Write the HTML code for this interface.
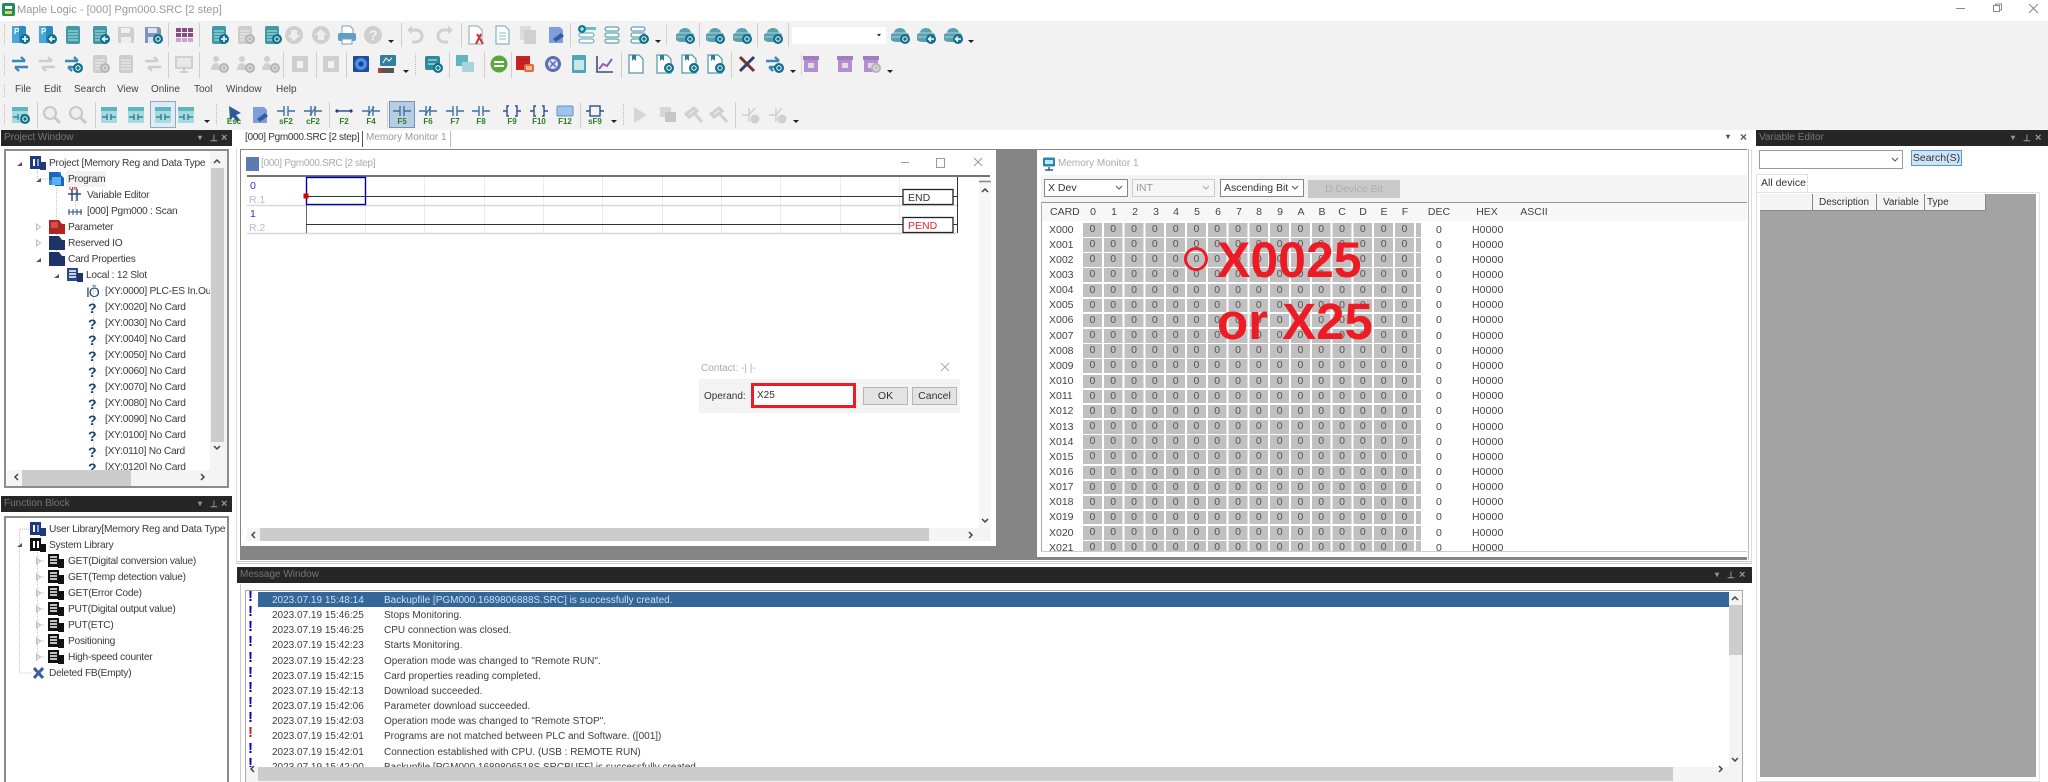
<!DOCTYPE html>
<html><head><meta charset="utf-8"><title>Maple Logic</title>
<style>
html,body{margin:0;padding:0;width:2048px;height:782px;overflow:hidden;background:#fff;font-family:"Liberation Sans",sans-serif;font-size:10px;color:#333}
div{position:absolute;box-sizing:border-box}
p{position:absolute;margin:0;line-height:14px;white-space:nowrap}
.bar{background:#262626;height:16px;color:#777;font-size:10px;line-height:16px;padding-left:3px;white-space:nowrap}
.bar span{position:absolute;top:0;color:#999;font-size:11px;font-weight:bold}
.m p{font-size:10px;color:#444;top:83px}
.tr p{font-size:10.2px;letter-spacing:-.25px;color:#3a3a3a;margin-top:1px}
.sb{background:#ccc}
.r{position:relative;height:15.17px;font-size:10.5px;color:#444}
.r b,.r u,.r s,.r em{position:absolute;top:0;font-weight:normal;font-style:normal;text-decoration:none;line-height:14px}
.r b{left:1049px}
.r u{left:1083px;top:.5px;width:331px;height:13.5px;line-height:13.5px;letter-spacing:14.96px;padding-left:6.5px;background:repeating-linear-gradient(90deg,#c0c0c0 0 18.8px,#fff 18.8px 20.8px);overflow:hidden;white-space:nowrap;color:#555}
.r s{left:1436px}
.r em{left:1472px;letter-spacing:.1px}
.h{top:205px;height:14px;line-height:14px;font-size:10.5px;color:#444;text-align:center}
.c{background:#fff;border:1px solid #999;height:18px;font-size:10.5px;line-height:16px;padding-left:3px;top:179px}
.c svg{position:absolute;right:4px;top:5px}
.ms p{font-size:10px;color:#3d3d3d;margin-top:1px}
.ms p.ex{font-size:15px;font-weight:bold;color:#0000d8;margin-top:-1px}
.ms p.ex.red{color:#e01010}
.ti{letter-spacing:-.3px}
</style></head><body>
<svg width="0" height="0" style="position:absolute"><defs>
<symbol id="pb" viewBox="0 0 20 20"><rect x="2" y="1" width="14" height="17" rx="2" fill="#2b8cc4"/><rect x="2" y="1" width="7" height="17" fill="#4aa5d8"/><text x="4" y="9" font-size="8" font-weight="bold" fill="#fff" font-family="Liberation Sans">P</text></symbol>
<symbol id="dt" viewBox="0 0 20 20"><rect x="3" y="1" width="14" height="18" rx="2" fill="#3e9aa6"/><path d="M5 6h10M5 9h10M5 12h10M5 15h10" stroke="#bfe3e6"/></symbol>
<symbol id="dg" viewBox="0 0 20 20"><rect x="3" y="1" width="14" height="18" rx="2" fill="#cdcdcd"/><path d="M5 6h10M5 9h10M5 12h10M5 15h10" stroke="#eee"/></symbol>
<symbol id="p" viewBox="0 0 20 20"><circle cx="15" cy="14" r="5" fill="#0f6f8c"/><path d="M12 14h6M15 11v6" stroke="#fff" stroke-width="1.6"/></symbol>
<symbol id="l" viewBox="0 0 20 20"><circle cx="15" cy="14" r="5" fill="#0f6f8c"/><path d="M18 14h-5M15 11.500l-2.500 2.500 2.500 2.500" stroke="#fff" stroke-width="1.4" fill="none"/></symbol>
<symbol id="o" viewBox="0 0 20 20"><circle cx="15" cy="14" r="5" fill="#0f6f8c"/><circle cx="15" cy="14" r="2.200" fill="none" stroke="#fff"/></symbol>
<symbol id="og" viewBox="0 0 20 20"><circle cx="15" cy="14" r="5" fill="#b5b5b5"/><circle cx="15" cy="14" r="2.200" fill="none" stroke="#eee"/></symbol>
<symbol id="sv" viewBox="0 0 20 20"><path d="M2 2h14l2 2v14H2z" fill="#cfcfcf"/><rect x="5" y="3" width="9" height="5" fill="#f0f0f0"/><rect x="5" y="12" width="10" height="6" fill="#eee"/></symbol>
<symbol id="svb" viewBox="0 0 20 20"><path d="M2 2h14l2 2v14H2z" fill="#7f93bb"/><rect x="5" y="3" width="9" height="5" fill="#dde4ef"/><rect x="5" y="12" width="10" height="6" fill="#dde4ef"/></symbol>
<symbol id="gr" viewBox="0 0 20 20"><g fill="#8a4a88"><rect x="2" y="3" width="5" height="4"/><rect x="8" y="3" width="5" height="4"/><rect x="14" y="3" width="5" height="4"/><rect x="2" y="8" width="5" height="4"/><rect x="8" y="8" width="5" height="4"/><rect x="14" y="8" width="5" height="4"/></g><g fill="#c9a6c9"><rect x="2" y="13" width="5" height="4"/><rect x="8" y="13" width="5" height="4"/><rect x="14" y="13" width="5" height="4"/></g></symbol>
<symbol id="cd" viewBox="0 0 20 20"><circle cx="10" cy="10" r="9" fill="#cfcfcf"/><path d="M7 5h6v5h3l-6 6-6-6h3z" fill="#eee"/></symbol>
<symbol id="cu" viewBox="0 0 20 20"><circle cx="10" cy="10" r="9" fill="#cfcfcf"/><path d="M7 15h6v-5h3l-6-6-6 6h3z" fill="#eee"/></symbol>
<symbol id="pr" viewBox="0 0 20 20"><path d="M5 1h8l3 3v5H5z" fill="#fff" stroke="#7a9dbb"/><rect x="1" y="8" width="18" height="8" rx="2" fill="#5f9fc7"/><rect x="5" y="14" width="10" height="5" fill="#fff" stroke="#7a9dbb"/></symbol>
<symbol id="q" viewBox="0 0 20 20"><circle cx="10" cy="10" r="9" fill="#cfcfcf"/><text x="6" y="15" font-size="14" font-weight="bold" fill="#f2f2f2" font-family="Liberation Sans">?</text></symbol>
<symbol id="un" viewBox="0 0 20 20"><path d="M5 5h6a5 5 0 0 1 0 12H7" fill="none" stroke="#cfcfcf" stroke-width="3"/><path d="M7 1L2 5l5 4z" fill="#cfcfcf"/></symbol>
<symbol id="re" viewBox="0 0 20 20"><path d="M15 5H9a5 5 0 0 0 0 12h4" fill="none" stroke="#cfcfcf" stroke-width="3"/><path d="M13 1l5 4-5 4z" fill="#cfcfcf"/></symbol>
<symbol id="dr" viewBox="0 0 20 20"><path d="M3 1h9l4 4v14H3z" fill="#fff" stroke="#8aa"/><path d="M11 9l6 10M15 9l-5 10" stroke="#c33" stroke-width="2"/></symbol>
<symbol id="dw" viewBox="0 0 20 20"><path d="M3 1h9l4 4v14H3z" fill="#fff" stroke="#6aa5b5"/><path d="M6 8h7M6 11h7M6 14h7" stroke="#8bb"/></symbol>
<symbol id="dc" viewBox="0 0 20 20"><rect x="2" y="1" width="11" height="14" fill="#ddd"/><rect x="6" y="5" width="12" height="14" fill="#d0d0d0"/></symbol>
<symbol id="nt" viewBox="0 0 20 20"><path d="M3 2h11l3 3v13H3z" fill="#7f9fdc"/><path d="M7 14l8-6 3 3-8 6z" fill="#355c9c"/></symbol>
<symbol id="ls" viewBox="0 0 20 20"><g fill="#fff" stroke="#5fa3b3" stroke-width="1.300"><rect x="2" y="2" width="14" height="4" rx="2"/><rect x="2" y="8" width="14" height="4" rx="2"/><rect x="2" y="14" width="14" height="4" rx="2"/></g></symbol>
<symbol id="lp" viewBox="0 0 20 20"><rect x="6" y="2" width="13" height="3" fill="#6bbcc8"/><g fill="#fff" stroke="#5fa3b3"><rect x="2" y="8" width="15" height="4" rx="2"/><rect x="2" y="14" width="15" height="4" rx="2"/></g><circle cx="5" cy="4" r="4" fill="#0f7f96"/><path d="M3 4h4M5 2v4" stroke="#fff"/></symbol>
<symbol id="cl" viewBox="0 0 20 20"><path d="M1 11c0-2 1-3 3-3 0-3 3-5 6-5s6 2 6 5c2 0 3 1 3 3v3c0 2-2 3-9 3s-9-1-9-3z" fill="#5aa0ae"/><path d="M3 8h14M2 12h16" stroke="#a8d4db"/></symbol>
<symbol id="sw" viewBox="0 0 20 20"><path d="M2 7h13M15 7l-4-4M2 7h12" stroke="#3a87b8" stroke-width="2.400" fill="none"/><path d="M18 13H5M5 13l4 4" stroke="#3a87b8" stroke-width="2.400" fill="none"/></symbol>
<symbol id="swg" viewBox="0 0 20 20"><path d="M2 7h13M15 7l-4-4M18 13H5M5 13l4 4" stroke="#cdcdcd" stroke-width="2.400" fill="none"/></symbol>
<symbol id="bx" viewBox="0 0 20 20"><rect x="2" y="2" width="16" height="16" rx="1" fill="#cfcfcf"/><rect x="7" y="7" width="6" height="7" fill="#f2f2f2"/></symbol>
<symbol id="mn" viewBox="0 0 20 20"><rect x="1" y="2" width="18" height="13" rx="1" fill="#cfcfcf"/><rect x="3" y="4" width="14" height="9" fill="#e8e8e8"/><path d="M6 18h8M10 15v3" stroke="#cfcfcf" stroke-width="2"/></symbol>
<symbol id="pe" viewBox="0 0 20 20"><circle cx="7" cy="5" r="3" fill="#cfcfcf"/><path d="M2 16c0-5 3-7 5-7s5 2 5 7z" fill="#cfcfcf"/></symbol>
<symbol id="gl" viewBox="0 0 20 20"><rect x="2" y="2" width="16" height="16" rx="1" fill="#1e4da0"/><circle cx="10" cy="10" r="6" fill="#4f8fe0"/><circle cx="10" cy="10" r="2.500" fill="#1d3f90"/></symbol>
<symbol id="mb" viewBox="0 0 20 20"><rect x="3" y="1" width="16" height="11" rx="1" fill="#2f7fa3"/><path d="M6 9l3-5 3 3 3-3" stroke="#fff" fill="none"/><rect x="1" y="14" width="16" height="5" fill="#555"/><rect x="1" y="14" width="3" height="5" fill="#c33"/></symbol>
<symbol id="tc" viewBox="0 0 20 20"><rect x="2" y="2" width="15" height="14" rx="2" fill="#2d8a9a"/><path d="M5 6h9M5 10h9" stroke="#cfe" /></symbol>
<symbol id="tp" viewBox="0 0 20 20"><rect x="1" y="1" width="12" height="11" fill="#5fb6c0"/><rect x="7" y="8" width="12" height="10" fill="#a9d4da"/></symbol>
<symbol id="gn" viewBox="0 0 20 20"><circle cx="10" cy="10" r="8.500" fill="#5aa83c"/><path d="M5 8h10M5 12h10" stroke="#fff" stroke-width="2"/></symbol>
<symbol id="rd" viewBox="0 0 20 20"><rect x="1" y="2" width="14" height="14" fill="#c22"/><path d="M3 6h10M3 10h10" stroke="#922"/><rect x="9" y="10" width="10" height="8" rx="2" fill="#e66b3c"/><path d="M11 13h6M11 15h6" stroke="#fff"/></symbol>
<symbol id="ge" viewBox="0 0 20 20"><circle cx="10" cy="10" r="8" fill="#5a6fb8"/><circle cx="10" cy="10" r="5" fill="#dfe4f3"/><path d="M7 7l6 6M13 7l-6 6" stroke="#5a6fb8" stroke-width="1.500"/></symbol>
<symbol id="ca" viewBox="0 0 20 20"><rect x="3" y="1" width="14" height="18" rx="1" fill="#4ea7b4"/><rect x="5" y="6" width="10" height="10" fill="#c8e6ea"/></symbol>
<symbol id="ch" viewBox="0 0 20 20"><path d="M2 2v16h16" stroke="#3d4a8a" stroke-width="1.600" fill="none"/><path d="M4 15l4-5 4 2 5-7" stroke="#8d5fb5" stroke-width="2" fill="none"/></symbol>
<symbol id="bk" viewBox="0 0 20 20"><path d="M3 1h10l4 4v14H3z" fill="#fff" stroke="#4f97a8" stroke-width="1.200"/><path d="M6 1h4v6L8 5 6 7z" fill="#2a7f96"/></symbol>
<symbol id="tl" viewBox="0 0 20 20"><path d="M3 3l14 14" stroke="#7a2f2f" stroke-width="3"/><path d="M17 3L3 17" stroke="#333f66" stroke-width="3"/></symbol>
<symbol id="pu" viewBox="0 0 20 20"><path d="M2 2h16v4H2z" fill="#a07cc0"/><rect x="3" y="6" width="14" height="12" fill="#b48ed0"/><rect x="7" y="9" width="6" height="5" fill="#ddd"/></symbol>
<symbol id="la" viewBox="0 0 20 20"><rect x="2" y="2" width="16" height="16" rx="1" fill="#a4dbe0"/><rect x="2" y="2" width="16" height="4" fill="#5eb6c2"/><path d="M3 12h5M12 12h5M8 9v6M12 9v6" stroke="#2b6f86" stroke-width="1.200"/></symbol>
<symbol id="mg" viewBox="0 0 20 20"><circle cx="8" cy="8" r="6" fill="#eee" stroke="#c8c8c8" stroke-width="2"/><path d="M12 12l6 6" stroke="#c8c8c8" stroke-width="3"/></symbol>
<symbol id="ar" viewBox="0 0 20 20"><path d="M3 1l12 7-5 2 4 5-3 2-4-5-3 4z" fill="#2e5a9c"/></symbol>
<symbol id="c1" viewBox="0 0 20 20"><path d="M1 6h7M12 6h7M8 1v10M12 1v10" stroke="#3f6f9f" stroke-width="1.400" fill="none"/></symbol>
<symbol id="c2" viewBox="0 0 20 20"><path d="M1 6h7M12 6h7M8 1v10M12 1v10M7 10l6-8" stroke="#3f6f9f" stroke-width="1.400" fill="none"/></symbol>
<symbol id="w" viewBox="0 0 20 20"><path d="M2 6h16" stroke="#4a5a9c" stroke-width="1.600"/><circle cx="3" cy="6" r="1.600" fill="#2b3f80"/><circle cx="17" cy="6" r="1.600" fill="#2b3f80"/></symbol>
<symbol id="br" viewBox="0 0 20 20"><path d="M1 6h4M15 6h4M7 1H5v10h2M13 1h2v10h-2" stroke="#2e4f8e" stroke-width="1.400" fill="none"/></symbol>
<symbol id="bb" viewBox="0 0 20 20"><rect x="2" y="1" width="16" height="10" rx="1" fill="#9fc3ea" stroke="#6a8fc0"/></symbol>
<symbol id="sq" viewBox="0 0 20 20"><path d="M1 6h4M15 6h4" stroke="#2e4f8e" stroke-width="1.400"/><rect x="5" y="1" width="10" height="10" fill="none" stroke="#2e4f8e" stroke-width="1.400"/></symbol>
<symbol id="py" viewBox="0 0 20 20"><path d="M4 2l13 8-13 8z" fill="#d6d6d6"/></symbol>
<symbol id="dd" viewBox="0 0 20 20"><rect x="2" y="2" width="11" height="10" fill="#d6d6d6"/><rect x="7" y="7" width="11" height="10" fill="#c6c6c6"/></symbol>
<symbol id="hm" viewBox="0 0 20 20"><path d="M2 9l8-6 3 3-8 6zM10 8l8 9" stroke="#d0d0d0" stroke-width="3" fill="none"/></symbol>
<symbol id="cg" viewBox="0 0 20 20"><path d="M1 10h7M8 3v14M8 10l6-7M12 12v6" stroke="#cfcfcf" stroke-width="1.500" fill="none"/><circle cx="14" cy="14" r="4.500" fill="#cfcfcf"/></symbol>
<symbol id="tn" viewBox="0 0 16 16"><rect x="0" y="1" width="11" height="13" fill="#1e3a7c"/><rect x="10" y="7" width="6" height="8" fill="#1e3a7c"/><rect x="3" y="4" width="2" height="7" fill="#fff"/><rect x="7" y="4" width="2" height="7" fill="#7fa5e0"/></symbol>
<symbol id="tk" viewBox="0 0 16 16"><rect x="0" y="1" width="11" height="13" fill="#111"/><rect x="10" y="7" width="6" height="8" fill="#111"/><rect x="3" y="4" width="2" height="7" fill="#fff"/><rect x="7" y="4" width="2" height="7" fill="#fff"/></symbol>
<symbol id="tb" viewBox="0 0 16 16"><rect x="0" y="1" width="12" height="13" fill="#2e8ae0"/><path d="M9 1l6 6v8H6V9H0V1z" fill="#1a66b8"/><rect x="3" y="6" width="9" height="8" fill="#5cb0f0"/></symbol>
<symbol id="tr" viewBox="0 0 16 16"><path d="M0 1h10l3 4h3v10H0z" fill="#b02424"/><path d="M2 3h7v6H2z" fill="#d05050"/></symbol>
<symbol id="ty" viewBox="0 0 16 16"><path d="M0 1h10l3 4h3v10H0z" fill="#1e3468"/></symbol>
<symbol id="tl2" viewBox="0 0 16 16"><rect x="0" y="1" width="11" height="13" fill="#2b4a8a"/><path d="M2 4h7M2 7h7M2 10h7" stroke="#fff" stroke-width="1.500"/><rect x="10" y="6" width="6" height="9" fill="#1e3468"/></symbol>
<symbol id="tf" viewBox="0 0 16 16"><rect x="0" y="1" width="11" height="13" fill="#111"/><path d="M2 4h7M2 7h7M2 10h7" stroke="#fff" stroke-width="1.500"/><rect x="10" y="6" width="6" height="9" fill="#111"/></symbol>
</defs></svg>

<!-- title -->
<svg style="position:absolute;left:2px;top:3px" width="13" height="13"><rect width="13" height="13" rx="2" fill="#1f8f5f"/><rect x="3" y="3" width="7" height="3" fill="#fff"/><rect x="3" y="8" width="7" height="3" fill="#e8d24a"/></svg>
<p style="left:17px;top:3px;font-size:11.100px;color:#999">Maple Logic - [000] Pgm000.SRC [2 step]</p>
<svg style="position:absolute;left:1950px;top:0" width="98" height="20" fill="none" stroke="#888"><path d="M6 8.500h9"/><rect x="43.500" y="5.500" width="6" height="6"/><path d="M45.500 5.500v-1.500h6v6h-2"/><path d="M79 4l9 9M88 4l-9 9"/></svg>

<!-- toolbar -->
<div style="left:0;top:21px;width:2048px;height:109px;background:#f2f2f2"></div>
<div style="left:792px;top:27px;width:94px;height:17px;background:#fff"></div>
<div style="left:150px;top:101px;width:26px;height:27px;background:#e2eaf3;border:1px solid #8fa8c4"></div>
<div style="left:389px;top:101px;width:26px;height:27px;background:#b8cde4;border:1px solid #6f93bb"></div>
<div class="m">
<p style="left:15px">File</p><p style="left:44px">Edit</p><p style="left:74px">Search</p><p style="left:117px">View</p><p style="left:151px">Online</p><p style="left:194px">Tool</p><p style="left:226px">Window</p><p style="left:276px">Help</p>
</div>
<svg style="position:absolute;left:0;top:0" width="2048" height="130">
<g stroke="#cfcfcf"><path d="M168.500 23v24M199.500 23v24M401.500 23v24M461.500 23v24M570.500 23v24M699.500 23v24M757.500 23v24M788.500 23v24M168.500 52v26M199.500 52v26M283.500 52v26M316.500 52v26M346.500 52v26M449.500 52v26M484.500 52v26M511.500 52v26M621.500 52v26M731.500 52v26M37.500 102v26M95.500 102v26M329.500 102v26M387.500 102v26M580.500 102v26M735.500 102v26"/></g>
<g stroke="#bbb" stroke-dasharray="1 1"><path d="M4.500 24v22M4.500 54v22M4.500 84v14M4.500 104v22M666.500 24v22M415.500 54v22M801.500 54v22M216.500 104v22M623.500 104v22"/></g>
<g fill="#222"><path d="M388 40h6l-3 3zM655 40h6l-3 3zM968 40h6l-3 3zM403 70h6l-3 3zM790 70h6l-3 3zM887 70h6l-3 3zM204 120h6l-3 3zM611 120h6l-3 3zM793 120h6l-3 3zM877 34h4l-2 2.500z"/></g>
<g id="r1">
<use href="#pb" x="10" y="25" width="20" height="20"/><use href="#p" x="10" y="25" width="20" height="20"/>
<use href="#pb" x="37" y="25" width="20" height="20"/><use href="#l" x="37" y="25" width="20" height="20"/>
<use href="#dt" x="63" y="25" width="20" height="20"/>
<use href="#dt" x="90" y="25" width="20" height="20"/><use href="#l" x="90" y="25" width="20" height="20"/>
<use href="#sv" x="116" y="25" width="20" height="20"/>
<use href="#svb" x="143" y="25" width="20" height="20"/><use href="#o" x="143" y="25" width="20" height="20"/>
<use href="#gr" x="174" y="25" width="20" height="20"/>
<use href="#dt" x="209" y="25" width="20" height="20"/><use href="#p" x="209" y="25" width="20" height="20"/>
<use href="#dg" x="235" y="25" width="20" height="20"/><use href="#og" x="235" y="25" width="20" height="20"/>
<use href="#dt" x="262" y="25" width="20" height="20"/><use href="#o" x="262" y="25" width="20" height="20"/>
<use href="#cd" x="284" y="25" width="20" height="20"/><use href="#cu" x="311" y="25" width="20" height="20"/>
<use href="#pr" x="337" y="25" width="20" height="20"/><use href="#q" x="363" y="25" width="20" height="20"/>
<use href="#un" x="405" y="25" width="20" height="20"/><use href="#re" x="435" y="25" width="20" height="20"/>
<use href="#dr" x="466" y="25" width="20" height="20"/><use href="#dw" x="493" y="25" width="20" height="20"/>
<use href="#dc" x="518" y="25" width="20" height="20"/><use href="#nt" x="546" y="25" width="20" height="20"/>
<use href="#lp" x="577" y="25" width="20" height="20"/><use href="#ls" x="603" y="25" width="20" height="20"/>
<use href="#ls" x="629" y="25" width="20" height="20"/><use href="#o" x="629" y="25" width="20" height="20"/>
<use href="#cl" x="675" y="25" width="20" height="20"/><use href="#o" x="675" y="25" width="20" height="20"/>
<use href="#cl" x="705" y="25" width="20" height="20"/><use href="#o" x="705" y="25" width="20" height="20"/>
<use href="#cl" x="732" y="25" width="20" height="20"/><use href="#o" x="732" y="25" width="20" height="20"/>
<use href="#cl" x="763" y="25" width="20" height="20"/><use href="#o" x="763" y="25" width="20" height="20"/>
<use href="#cl" x="890" y="25" width="20" height="20"/><use href="#o" x="890" y="25" width="20" height="20"/>
<use href="#cl" x="916" y="25" width="20" height="20"/><use href="#l" x="916" y="25" width="20" height="20"/>
<use href="#cl" x="943" y="25" width="20" height="20"/><use href="#l" x="943" y="25" width="20" height="20"/>
</g>
<g id="r2">
<use href="#sw" x="10" y="54" width="20" height="20"/><use href="#swg" x="37" y="54" width="20" height="20"/>
<use href="#sw" x="63" y="54" width="20" height="20"/><use href="#o" x="63" y="54" width="20" height="20"/>
<use href="#dg" x="90" y="54" width="20" height="20"/><use href="#og" x="90" y="54" width="20" height="20"/>
<use href="#dg" x="116" y="54" width="20" height="20"/><use href="#swg" x="143" y="54" width="20" height="20"/>
<use href="#mn" x="174" y="54" width="20" height="20"/>
<use href="#pe" x="209" y="54" width="20" height="20"/><use href="#og" x="209" y="54" width="20" height="20"/>
<use href="#pe" x="235" y="54" width="20" height="20"/><use href="#og" x="235" y="54" width="20" height="20"/>
<use href="#pe" x="260" y="54" width="20" height="20"/><use href="#og" x="260" y="54" width="20" height="20"/>
<use href="#bx" x="290" y="54" width="20" height="20"/><use href="#bx" x="321" y="54" width="20" height="20"/>
<use href="#gl" x="351" y="54" width="20" height="20"/><use href="#mb" x="377" y="54" width="20" height="20"/>
<use href="#tc" x="423" y="54" width="20" height="20"/><use href="#o" x="423" y="54" width="20" height="20"/>
<use href="#tp" x="455" y="54" width="20" height="20"/>
<use href="#gn" x="489" y="54" width="20" height="20"/><use href="#rd" x="515" y="54" width="20" height="20"/>
<use href="#ge" x="543" y="54" width="20" height="20"/><use href="#ca" x="569" y="54" width="20" height="20"/>
<use href="#ch" x="595" y="54" width="20" height="20"/><use href="#bk" x="626" y="54" width="20" height="20"/>
<use href="#bk" x="654" y="54" width="20" height="20"/><use href="#o" x="654" y="54" width="20" height="20"/>
<use href="#bk" x="679" y="54" width="20" height="20"/><use href="#o" x="679" y="54" width="20" height="20"/>
<use href="#bk" x="705" y="54" width="20" height="20"/><use href="#o" x="705" y="54" width="20" height="20"/>
<use href="#tl" x="737" y="54" width="20" height="20"/>
<use href="#sw" x="764" y="54" width="20" height="20"/><use href="#o" x="764" y="54" width="20" height="20"/>
<use href="#pu" x="801" y="54" width="20" height="20"/><use href="#pu" x="835" y="54" width="20" height="20"/>
<use href="#pu" x="861" y="54" width="20" height="20"/><use href="#og" x="861" y="54" width="20" height="20"/>
</g>
<g id="r3">
<use href="#la" x="10" y="105" width="20" height="20"/><use href="#o" x="10" y="105" width="20" height="20"/>
<use href="#mg" x="42" y="105" width="20" height="20"/><use href="#mg" x="68" y="105" width="20" height="20"/>
<use href="#la" x="99" y="105" width="20" height="20"/><use href="#la" x="126" y="105" width="20" height="20"/>
<use href="#la" x="153" y="105" width="20" height="20"/><use href="#la" x="176" y="105" width="20" height="20"/>
<use href="#ar" x="226" y="105" width="20" height="20"/><use href="#nt" x="250" y="105" width="20" height="20"/>
<use href="#c1" x="276" y="105" width="20" height="20"/><use href="#c2" x="303" y="105" width="20" height="20"/>
<use href="#w" x="334" y="105" width="20" height="20"/><use href="#c2" x="361" y="105" width="20" height="20"/>
<use href="#c1" x="392" y="105" width="20" height="20"/><use href="#c2" x="418" y="105" width="20" height="20"/>
<use href="#c1" x="445" y="105" width="20" height="20"/><use href="#c1" x="471" y="105" width="20" height="20"/>
<use href="#br" x="502" y="105" width="20" height="20"/><use href="#br" x="529" y="105" width="20" height="20"/>
<use href="#bb" x="555" y="105" width="20" height="20"/><use href="#sq" x="585" y="105" width="20" height="20"/>
<use href="#py" x="630" y="105" width="20" height="20"/><use href="#dd" x="658" y="105" width="20" height="20"/>
<use href="#hm" x="684" y="105" width="20" height="20"/><use href="#hm" x="709" y="105" width="20" height="20"/>
<use href="#cg" x="741" y="105" width="20" height="20"/><use href="#cg" x="768" y="105" width="20" height="20"/>
<g font-family="Liberation Sans" font-size="8" font-weight="bold" fill="#2a7d22" text-anchor="middle">
<text x="234" y="124">Esc</text><text x="286" y="124">sF2</text><text x="313" y="124">cF2</text><text x="344" y="124">F2</text><text x="371" y="124">F4</text><text x="402" y="124">F5</text><text x="428" y="124">F6</text><text x="455" y="124">F7</text><text x="481" y="124">F8</text><text x="512" y="124">F9</text><text x="539" y="124">F10</text><text x="565" y="124">F12</text><text x="595" y="124">sF9</text>
</g></g>
</svg>

<!-- project window -->
<div class="bar" style="left:1px;top:130px;width:231px">Project Window<span style="left:197px;font-size:8px">▾</span><span style="left:209px;font-size:9px">⊥</span><span style="left:220px">×</span></div>
<div style="left:4px;top:149px;width:225px;height:339px;border:2px solid #8c8c8c;background:#fff"></div>
<div class="tr" style="left:0;top:0;width:210px;height:470px;overflow:hidden">
<svg style="position:absolute;left:0;top:0" width="210" height="470"><g stroke="#c4c4c4" stroke-dasharray="1 1" fill="none"><path d="M37.500 170V179H48M56.500 188V259M56 227h5M56 243h5M56 259h5M75.500 188V211H80M93.500 284V470M93 291h6M93 307h6M93 323h6M93 339h6M93 355h6M93 371h6M93 387h6M93 403h6M93 419h6M93 435h6M93 451h6"/></g>
<g fill="#555"><path d="M17 166l5-4v4zM36 182l5-4v4zM54 278l5-4v4z"/><path d="M36 262l5-4v4z"/></g><g fill="none" stroke="#bbb"><path d="M36.500 224l4 3-4 3zM36.500 240l4 3-4 3z"/></g>
<use href="#tn" x="30" y="155" width="16" height="16"/><use href="#tb" x="49" y="171" width="16" height="16"/>
<use href="#tr" x="49" y="219" width="16" height="16"/><use href="#ty" x="49" y="235" width="16" height="16"/><use href="#ty" x="49" y="251" width="16" height="16"/><use href="#tl2" x="67" y="267" width="16" height="16"/>
<g fill="none" stroke="#2a4a8a"><path d="M68 194h13M72 189v12M77 189v12" stroke-width="1.500"/><path d="M68 212h14M69 209v6M73 209v6M77 209v6M81 209v6"/></g><text x="69" y="190" font-size="6" font-weight="bold" fill="#c22" font-family="Liberation Sans">UR</text>
</svg>
<div style="left:66px;top:171px;width:40px;height:16px;background:#f2f2f2"></div>
<p style="left:49px;top:156px">Project [Memory Reg and Data Type</p>
<p style="left:68px;top:172px">Program</p>
<p style="left:87px;top:188px">Variable Editor</p>
<p style="left:87px;top:204px">[000] Pgm000 : Scan</p>
<p style="left:68px;top:220px">Parameter</p>
<p style="left:68px;top:236px">Reserved IO</p>
<p style="left:68px;top:252px">Card Properties</p>
<p style="left:86px;top:268px">Local : 12 Slot</p>
<p style="left:86px;top:284px;font-size:14px;color:#24427c;letter-spacing:-1px">IŌ</p>
<p style="left:105px;top:284px">[XY:0000] PLC-ES In.Ou</p>
<p style="left:105px;top:300px">[XY:0020] No Card</p><p style="left:88px;top:300px;font-size:14px;font-weight:bold;color:#1e3a7c">?</p>
<p style="left:105px;top:316px">[XY:0030] No Card</p><p style="left:88px;top:316px;font-size:14px;font-weight:bold;color:#1e3a7c">?</p>
<p style="left:105px;top:332px">[XY:0040] No Card</p><p style="left:88px;top:332px;font-size:14px;font-weight:bold;color:#1e3a7c">?</p>
<p style="left:105px;top:348px">[XY:0050] No Card</p><p style="left:88px;top:348px;font-size:14px;font-weight:bold;color:#1e3a7c">?</p>
<p style="left:105px;top:364px">[XY:0060] No Card</p><p style="left:88px;top:364px;font-size:14px;font-weight:bold;color:#1e3a7c">?</p>
<p style="left:105px;top:380px">[XY:0070] No Card</p><p style="left:88px;top:380px;font-size:14px;font-weight:bold;color:#1e3a7c">?</p>
<p style="left:105px;top:396px">[XY:0080] No Card</p><p style="left:88px;top:396px;font-size:14px;font-weight:bold;color:#1e3a7c">?</p>
<p style="left:105px;top:412px">[XY:0090] No Card</p><p style="left:88px;top:412px;font-size:14px;font-weight:bold;color:#1e3a7c">?</p>
<p style="left:105px;top:428px">[XY:0100] No Card</p><p style="left:88px;top:428px;font-size:14px;font-weight:bold;color:#1e3a7c">?</p>
<p style="left:105px;top:444px">[XY:0110] No Card</p><p style="left:88px;top:444px;font-size:14px;font-weight:bold;color:#1e3a7c">?</p>
<p style="left:105px;top:460px">[XY:0120] No Card</p><p style="left:88px;top:460px;font-size:14px;font-weight:bold;color:#1e3a7c">?</p>
</div>
<div style="left:210px;top:151px;width:17px;height:320px;background:#f4f4f4"></div>
<div class="sb" style="left:211px;top:168px;width:13px;height:274px"></div>
<div style="left:7px;top:470px;width:220px;height:16px;background:#f4f4f4"></div>
<div class="sb" style="left:22px;top:470px;width:109px;height:16px"></div>
<svg style="position:absolute;left:0;top:150px" width="232" height="340" fill="none" stroke="#444" stroke-width="1.500"><path d="M214 13l3-3 3 3M214 296l3 3 3-3M18 330l-3-3 3-3M201 324l3 3-3 3"/></svg>

<!-- function block -->
<div class="bar" style="left:1px;top:496px;width:231px">Function Block<span style="left:197px;font-size:8px">▾</span><span style="left:209px;font-size:9px">⊥</span><span style="left:220px">×</span></div>
<div style="left:4px;top:516px;width:225px;height:266px;border:2px solid #8c8c8c;border-bottom:0;background:#fff"></div>
<div class="tr" style="left:0;top:0;width:226px;height:782px;overflow:hidden">
<svg style="position:absolute;left:0;top:0" width="226" height="700"><g stroke="#c4c4c4" stroke-dasharray="1 1" fill="none"><path d="M20 529H30M19.500 529V673H32M37.500 552V657M37 561h8M37 577h8M37 593h8M37 609h8M37 625h8M37 641h8M37 657h8"/></g>
<path d="M17 547l5-4v4z" fill="#555"/>
<g fill="none" stroke="#bbb"><path d="M36.500 558l4 3-4 3zM36.500 574l4 3-4 3zM36.500 590l4 3-4 3zM36.500 606l4 3-4 3zM36.500 622l4 3-4 3zM36.500 638l4 3-4 3zM36.500 654l4 3-4 3z"/></g>
<use href="#tn" x="30" y="521" width="16" height="16"/><use href="#tk" x="30" y="537" width="16" height="16"/>
<use href="#tf" x="48" y="553" width="16" height="16"/><use href="#tf" x="48" y="569" width="16" height="16"/><use href="#tf" x="48" y="585" width="16" height="16"/><use href="#tf" x="48" y="601" width="16" height="16"/><use href="#tf" x="48" y="617" width="16" height="16"/><use href="#tf" x="48" y="633" width="16" height="16"/><use href="#tf" x="48" y="649" width="16" height="16"/>
<path d="M34 668l9 10M43 668l-9 10" stroke="#3a5f9c" stroke-width="3"/></svg>
<p style="left:49px;top:522px">User Library[Memory Reg and Data Type</p>
<p style="left:49px;top:538px">System Library</p>
<p style="left:68px;top:554px">GET(Digital conversion value)</p>
<p style="left:68px;top:570px">GET(Temp detection value)</p>
<p style="left:68px;top:586px">GET(Error Code)</p>
<p style="left:68px;top:602px">PUT(Digital output value)</p>
<p style="left:68px;top:618px">PUT(ETC)</p>
<p style="left:68px;top:634px">Positioning</p>
<p style="left:68px;top:650px">High-speed counter</p>
<p style="left:49px;top:666px">Deleted FB(Empty)</p>
</div>

<!-- MDI tabs -->
<p class="ti" style="left:245px;top:131px;font-size:10px;color:#333">[000] Pgm000.SRC [2 step]</p>
<div style="left:362px;top:131px;width:1px;height:16px;background:#555"></div>
<p style="left:366px;top:131px;font-size:10px;color:#999">Memory Monitor 1</p>
<div style="left:450px;top:131px;width:1px;height:16px;background:#bbb"></div>
<p style="left:1726px;top:130px;font-size:8px;color:#555;font-weight:bold">▾</p>
<p style="left:1740px;top:130px;font-size:12px;color:#555;font-weight:bold">×</p>

<div style="left:240px;top:149px;width:1507px;height:411px;background:#858585"></div>
<div style="left:1748px;top:149px;width:1px;height:411px;background:#bbb"></div>
<div style="left:1751px;top:149px;width:1px;height:415px;background:#ddd"></div>
<div style="left:237px;top:561px;width:1515px;height:3px;border-top:1px solid #ccc;border-bottom:1px solid #ccc"></div>
<div style="left:236px;top:148px;width:1px;height:416px;background:#ddd"></div>

<!-- ladder window -->
<div style="left:241px;top:150px;width:755px;height:396px;background:#fff;overflow:hidden">
</div>
<svg style="position:absolute;left:241px;top:150px" width="755" height="396"><g transform="translate(-241,-150)">
<rect x="246" y="157" width="13" height="14" fill="#5c7bb0"/>
<g fill="none" stroke="#999"><path d="M901 162.500h8"/><rect x="936.500" y="158.500" width="8" height="9"/><path d="M974 158l8 8M982 158l-8 8"/></g>
<path d="M247 176h743" stroke="#444" stroke-width="1.500"/>
<g stroke="#eaeaea"><path d="M365.500 177V233M424.500 177V233M484.500 177V233M543.500 177V233M602.500 177V233M662.500 177V233M721.500 177V233M780.500 177V233M840.500 177V233M899.500 177V233"/></g>
<path d="M247 205.500h710M247 233.500h710" stroke="#d8d8d8" stroke-width="1.500"/>
<path d="M306.500 177V233" stroke="#666"/>
<path d="M957.500 177V233" stroke="#333"/>
<path d="M306 196.500h597M306 224.500h597" stroke="#333"/>
<rect x="306.500" y="177.500" width="59" height="27" fill="none" stroke="#0000a8" stroke-width="1.400"/>
<rect x="303.500" y="193.500" width="5" height="5" fill="#e00000"/>
<rect x="903" y="189.500" width="50" height="15" fill="#fff" stroke="#222" stroke-width="1.300"/>
<rect x="903" y="217.500" width="50" height="15" fill="#fff" stroke="#222" stroke-width="1.300"/>
<path d="M953 196.500h4M953 224.500h4" stroke="#333"/>
<text x="908" y="201" font-family="Liberation Sans" font-size="10.500" fill="#333">END</text>
<text x="908" y="229" font-family="Liberation Sans" font-size="10.500" fill="#e8242c">PEND</text>
<text x="250" y="189" font-family="Liberation Sans" font-size="10.500" fill="#3333cc">0</text>
<text x="249" y="203" font-family="Liberation Sans" font-size="10.500" fill="#b8b8d8">R.1</text>
<text x="250" y="217" font-family="Liberation Sans" font-size="10.500" fill="#3333cc">1</text>
<text x="249" y="231" font-family="Liberation Sans" font-size="10.500" fill="#b8b8d8">R.2</text>
<rect x="979" y="178" width="12" height="350" fill="#f6f6f6"/><path d="M979 181.500h12" stroke="#888" stroke-width="1.500"/>
<path d="M982 192l3-3 3 3M982 519l3 3 3-3" fill="none" stroke="#444" stroke-width="1.500"/>
<rect x="260" y="528" width="669" height="13" fill="#ccc"/><rect x="929" y="528" width="62" height="13" fill="#f4f4f4"/><rect x="247" y="528" width="13" height="13" fill="#f4f4f4"/>
<path d="M255 532l-3 3 3 3M969 532l3 3-3 3" fill="none" stroke="#444" stroke-width="1.500"/>
</g></svg>
<p class="ti" style="left:261px;top:157px;font-size:10px;color:#aaa">[000] Pgm000.SRC [2 step]</p>
<div style="left:699px;top:379px;width:261px;height:34px;background:#f3f3f3"></div>
<p style="left:701px;top:362px;font-size:10px;color:#aaa">Contact: -| |-</p>
<svg style="position:absolute;left:940px;top:362px" width="10" height="10" fill="none" stroke="#aaa"><path d="M1 1l8 8M9 1l-8 8"/></svg>
<p style="left:704px;top:390px;font-size:10px;color:#333">Operand:</p>
<div style="left:751px;top:383px;width:105px;height:25px;background:#fff;border:3px solid #ed1c24"></div>
<p style="left:757px;top:389px;font-size:10px;color:#333">X25</p>
<div style="left:863px;top:387px;width:45px;height:18px;background:#e3e3e3;border:1px solid #b5b5b5;text-align:center;font-size:10.500px;line-height:16px">OK</div>
<div style="left:912px;top:387px;width:45px;height:18px;background:#e3e3e3;border:1px solid #b5b5b5;text-align:center;font-size:10.500px;line-height:16px">Cancel</div>

<!-- memory monitor -->
<div style="left:1037px;top:150px;width:710px;height:407px;background:#fff"></div>
<svg style="position:absolute;left:1042px;top:157px" width="14" height="14"><rect x="1" y="0.500" width="12" height="9" rx="1" fill="#2a88b0"/><rect x="3" y="3" width="8" height="4" fill="#bfe8f0"/><path d="M3 13h8M7 10v3" stroke="#2a5f8a" stroke-width="1.500"/></svg>
<p style="left:1058px;top:157px;font-size:10px;color:#aaa">Memory Monitor 1</p>
<div style="left:1041px;top:175px;width:706px;height:27px;background:#f3f3f3"></div>
<div class="c" style="left:1044px;width:84px;border-color:#888">X Dev<svg width="8" height="6" fill="none" stroke="#555"><path d="M1 1l3 3 3-3"/></svg></div>
<div class="c" style="left:1132px;width:83px;border-color:#ccc;background:#f6f6f6;color:#999">INT<svg width="8" height="6" fill="none" stroke="#aaa"><path d="M1 1l3 3 3-3"/></svg></div>
<div class="c" style="left:1220px;width:84px;border-color:#888">Ascending Bit<svg width="8" height="6" fill="none" stroke="#555"><path d="M1 1l3 3 3-3"/></svg></div>
<div style="left:1308px;top:180px;width:92px;height:18px;background:#c9c9c9;color:#aeaeae;font-size:10.500px;line-height:18px;text-align:center">D Device Bit</div>
<div style="left:1041px;top:202px;width:706px;height:1px;background:#999"></div>
<div style="left:1041px;top:202px;width:1px;height:350px;background:#aaa"></div>
<div style="left:1042px;top:203px;width:705px;height:18px;background:#f7f7f7"></div>
<div class="h" style="left:1050px;width:24px">CARD</div>
<div class="h" style="left:1083px;width:20px">0</div><div class="h" style="left:1104px;width:20px">1</div><div class="h" style="left:1125px;width:20px">2</div><div class="h" style="left:1146px;width:20px">3</div><div class="h" style="left:1166px;width:20px">4</div><div class="h" style="left:1187px;width:20px">5</div><div class="h" style="left:1208px;width:20px">6</div><div class="h" style="left:1229px;width:20px">7</div><div class="h" style="left:1249px;width:20px">8</div><div class="h" style="left:1270px;width:20px">9</div><div class="h" style="left:1291px;width:20px">A</div><div class="h" style="left:1312px;width:20px">B</div><div class="h" style="left:1332px;width:20px">C</div><div class="h" style="left:1353px;width:20px">D</div><div class="h" style="left:1374px;width:20px">E</div><div class="h" style="left:1395px;width:20px">F</div>
<div class="h" style="left:1424px;width:30px">DEC</div><div class="h" style="left:1472px;width:30px">HEX</div><div class="h" style="left:1519px;width:30px">ASCII</div>
<div style="left:0;top:0;width:1747px;height:551px;overflow:hidden">
<div style="left:0;top:222.500px;width:1747px">
<div class="r"><b>X000</b><u>0000000000000000</u><s>0</s><em>H0000</em></div>
<div class="r"><b>X001</b><u>0000000000000000</u><s>0</s><em>H0000</em></div>
<div class="r"><b>X002</b><u>0000000000000000</u><s>0</s><em>H0000</em></div>
<div class="r"><b>X003</b><u>0000000000000000</u><s>0</s><em>H0000</em></div>
<div class="r"><b>X004</b><u>0000000000000000</u><s>0</s><em>H0000</em></div>
<div class="r"><b>X005</b><u>0000000000000000</u><s>0</s><em>H0000</em></div>
<div class="r"><b>X006</b><u>0000000000000000</u><s>0</s><em>H0000</em></div>
<div class="r"><b>X007</b><u>0000000000000000</u><s>0</s><em>H0000</em></div>
<div class="r"><b>X008</b><u>0000000000000000</u><s>0</s><em>H0000</em></div>
<div class="r"><b>X009</b><u>0000000000000000</u><s>0</s><em>H0000</em></div>
<div class="r"><b>X010</b><u>0000000000000000</u><s>0</s><em>H0000</em></div>
<div class="r"><b>X011</b><u>0000000000000000</u><s>0</s><em>H0000</em></div>
<div class="r"><b>X012</b><u>0000000000000000</u><s>0</s><em>H0000</em></div>
<div class="r"><b>X013</b><u>0000000000000000</u><s>0</s><em>H0000</em></div>
<div class="r"><b>X014</b><u>0000000000000000</u><s>0</s><em>H0000</em></div>
<div class="r"><b>X015</b><u>0000000000000000</u><s>0</s><em>H0000</em></div>
<div class="r"><b>X016</b><u>0000000000000000</u><s>0</s><em>H0000</em></div>
<div class="r"><b>X017</b><u>0000000000000000</u><s>0</s><em>H0000</em></div>
<div class="r"><b>X018</b><u>0000000000000000</u><s>0</s><em>H0000</em></div>
<div class="r"><b>X019</b><u>0000000000000000</u><s>0</s><em>H0000</em></div>
<div class="r"><b>X020</b><u>0000000000000000</u><s>0</s><em>H0000</em></div>
<div class="r"><b>X021</b><u>0000000000000000</u><s>0</s><em>H0000</em></div>
</div></div>
<div style="left:1041px;top:551px;width:706px;height:1px;background:#ccc"></div>
<p style="left:1217px;top:235px;font-size:50px;line-height:51px;font-weight:bold;color:#ed1c24">X0025</p>
<p style="left:1217px;top:296px;font-size:51px;line-height:51px;font-weight:bold;color:#ed1c24">or X25</p>
<svg style="position:absolute;left:1183px;top:246px" width="26" height="26"><circle cx="13" cy="13" r="10.500" fill="none" stroke="#ed1c24" stroke-width="3"/></svg>

<!-- message window -->
<div class="bar" style="left:237px;top:567px;width:1515px">Message Window<span style="left:1478px;font-size:8px">▾</span><span style="left:1490px;font-size:9px">⊥</span><span style="left:1502px">×</span></div>
<div style="left:245px;top:590px;width:1498px;height:192px;border:1px solid #aaa;border-bottom:0;background:#fff"></div>
<div style="left:240px;top:584px;width:1px;height:198px;background:#ccc"></div>
<div style="left:258px;top:592px;width:1471px;height:15px;background:#336699"></div>
<div class="ms" style="left:0;top:0;width:1729px;height:767px;overflow:hidden">
<p class="ex" style="left:248px;top:591px">!</p><p style="left:272px;top:593px;color:#cfe0ef">2023.07.19 15:48:14</p><p style="left:384px;top:593px;color:#cfe0ef">Backupfile [PGM000.1689806888S.SRC] is successfully created.</p>
<p class="ex" style="left:248px;top:606px">!</p><p style="left:272px;top:608px">2023.07.19 15:46:25</p><p style="left:384px;top:608px">Stops Monitoring.</p>
<p class="ex" style="left:248px;top:621px">!</p><p style="left:272px;top:623px">2023.07.19 15:46:25</p><p style="left:384px;top:623px">CPU connection was closed.</p>
<p class="ex" style="left:248px;top:636px">!</p><p style="left:272px;top:638px">2023.07.19 15:42:23</p><p style="left:384px;top:638px">Starts Monitoring.</p>
<p class="ex" style="left:248px;top:652px">!</p><p style="left:272px;top:654px">2023.07.19 15:42:23</p><p style="left:384px;top:654px">Operation mode was changed to "Remote RUN".</p>
<p class="ex" style="left:248px;top:667px">!</p><p style="left:272px;top:669px">2023.07.19 15:42:15</p><p style="left:384px;top:669px">Card properties reading completed.</p>
<p class="ex" style="left:248px;top:682px">!</p><p style="left:272px;top:684px">2023.07.19 15:42:13</p><p style="left:384px;top:684px">Download succeeded.</p>
<p class="ex" style="left:248px;top:697px">!</p><p style="left:272px;top:699px">2023.07.19 15:42:06</p><p style="left:384px;top:699px">Parameter download succeeded.</p>
<p class="ex" style="left:248px;top:712px">!</p><p style="left:272px;top:714px">2023.07.19 15:42:03</p><p style="left:384px;top:714px">Operation mode was changed to "Remote STOP".</p>
<p class="ex red" style="left:248px;top:727px">!</p><p style="left:272px;top:729px">2023.07.19 15:42:01</p><p style="left:384px;top:729px">Programs are not matched between PLC and Software. ([001])</p>
<p class="ex" style="left:248px;top:743px">!</p><p style="left:272px;top:745px">2023.07.19 15:42:01</p><p style="left:384px;top:745px">Connection established with CPU. (USB : REMOTE RUN)</p>
<p class="ex" style="left:248px;top:758px">!</p><p style="left:272px;top:760px">2023.07.19 15:42:00</p><p style="left:384px;top:760px">Backupfile [PGM000.1689806518S.SRCBUFF] is successfully created.</p>
</div>
<div style="left:1729px;top:592px;width:13px;height:190px;background:#f4f4f4"></div>
<div class="sb" style="left:1729px;top:605px;width:13px;height:50px"></div>
<div style="left:246px;top:767px;width:1483px;height:15px;background:#f4f4f4"></div>
<div class="sb" style="left:258px;top:767px;width:1415px;height:14px"></div>
<svg style="position:absolute;left:240px;top:590px" width="1510" height="192" fill="none" stroke="#444" stroke-width="1.500"><path d="M1492 10l3-3 3 3M1492 168l3 3 3-3M14 182l-3-3 3-3M1479 182l3-3-3-3"/></svg>

<!-- variable editor -->
<div class="bar" style="left:1756px;top:130px;width:292px">Variable Editor<span style="left:255px;font-size:8px">▾</span><span style="left:267px;font-size:9px">⊥</span><span style="left:279px">×</span></div>
<div style="left:1759px;top:150px;width:144px;height:19px;background:#fff;border:1px solid #999"></div>
<svg style="position:absolute;left:1891px;top:157px" width="8" height="6" fill="none" stroke="#555"><path d="M1 1l3 3 3-3"/></svg>
<div style="left:1911px;top:150px;width:51px;height:16px;background:#cde4f7;border:1px solid #5b9bd5;font-size:10.500px;line-height:14px;text-align:center;color:#333">Search(S)</div>
<div style="left:1756px;top:174px;width:52px;height:19px;background:#fff;border:1px solid #e2e2e2;border-bottom:0;font-size:10.500px;line-height:17px;padding-left:4px;color:#333">All device</div>
<div style="left:1756px;top:192px;width:284px;height:590px;border:1px solid #e2e2e2;background:#fff"></div>
<div style="left:1760px;top:194px;width:276px;height:583px;background:#a3a3a3"></div>
<div style="left:1760px;top:194px;width:226px;height:17px;background:#f4f4f4;border-right:1px solid #888;border-bottom:1px solid #888"></div>
<div style="left:1812px;top:194px;width:1px;height:17px;background:#888"></div>
<div style="left:1876px;top:194px;width:1px;height:17px;background:#888"></div>
<div style="left:1924px;top:194px;width:1px;height:17px;background:#888"></div>
<p style="left:1819px;top:196px;font-size:10px">Description</p>
<p style="left:1883px;top:196px;font-size:10px">Variable</p>
<p style="left:1927px;top:196px;font-size:10px">Type</p>
</body></html>
